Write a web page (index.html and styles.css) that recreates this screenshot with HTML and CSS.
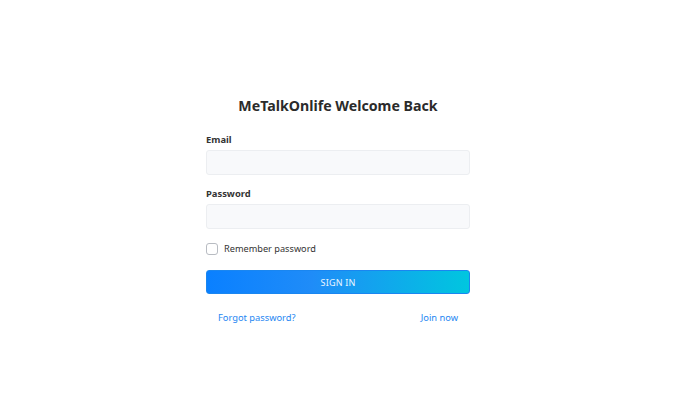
FILE: index.html
```html
<!DOCTYPE html>
<html>
<head>
<meta charset="utf-8">
<link rel="stylesheet" href="styles.css">
</head>
<body>
<div class="page">
  <form class="card">
    <h1 class="title">MeTalkOnlife Welcome Back</h1>
    <label class="label">Email</label>
    <input class="field" type="text">
    <label class="label label-pw">Password</label>
    <input class="field" type="password">
    <label class="remember"><span class="box"></span><span>Remember password</span></label>
    <button class="btn" type="button">SIGN IN</button>
    <div class="links">
      <a class="link">Forgot password?</a>
      <a class="link">Join now</a>
    </div>
  </form>
</div>
</body>
</html>
```
FILE: styles.css
```css
* { box-sizing: border-box; }
html, body { margin: 0; padding: 0; background: #fff; }
body { font-family: "Noto Sans", "Open Sans", sans-serif; color: #333; }
.page {
  display: flex;
  justify-content: center;
  padding: 96px 4px 0 0;
  height: 393px;
}
.card {
  width: 264px;
  display: flex;
  flex-direction: column;
}
.title {
  margin: 0;
  font-size: 14.2px;
  line-height: 20px;
  font-weight: 700;
  text-align: center;
  color: #2b2b2b;
}
.label {
  margin-top: 17px;
  font-size: 9.4px;
  line-height: 14px;
  font-weight: 700;
  color: #333;
}
.label-pw { margin-top: 12px; }
.field {
  margin-top: 3px;
  height: 25px;
  width: 100%;
  border: 1px solid #eceef1;
  border-radius: 3px;
  background: #f8f9fb;
  outline: none;
}
.remember {
  margin-top: 14px;
  display: flex;
  align-items: center;
  gap: 6px;
  font-size: 9.2px;
  line-height: 12px;
  color: #333;
}
.box {
  width: 12px;
  height: 12px;
  border: 1px solid #b8bcc2;
  border-radius: 3px;
  background: #fff;
}
.btn {
  margin-top: 15px;
  height: 24px;
  width: 100%;
  border: 1px solid #1a86f0;
  border-radius: 3px;
  background: linear-gradient(90deg, #0a80ff 0%, #1f8cf8 40%, #00c6df 100%);
  color: #eaf6ff;
  font-family: inherit;
  font-size: 9px;
  letter-spacing: 0.2px;
}
.links {
  margin-top: 18px;
  display: flex;
  justify-content: space-between;
  padding: 0 12px;
}
.link {
  font-size: 9.3px;
  line-height: 12px;
  color: #1e86f2;
}
```
